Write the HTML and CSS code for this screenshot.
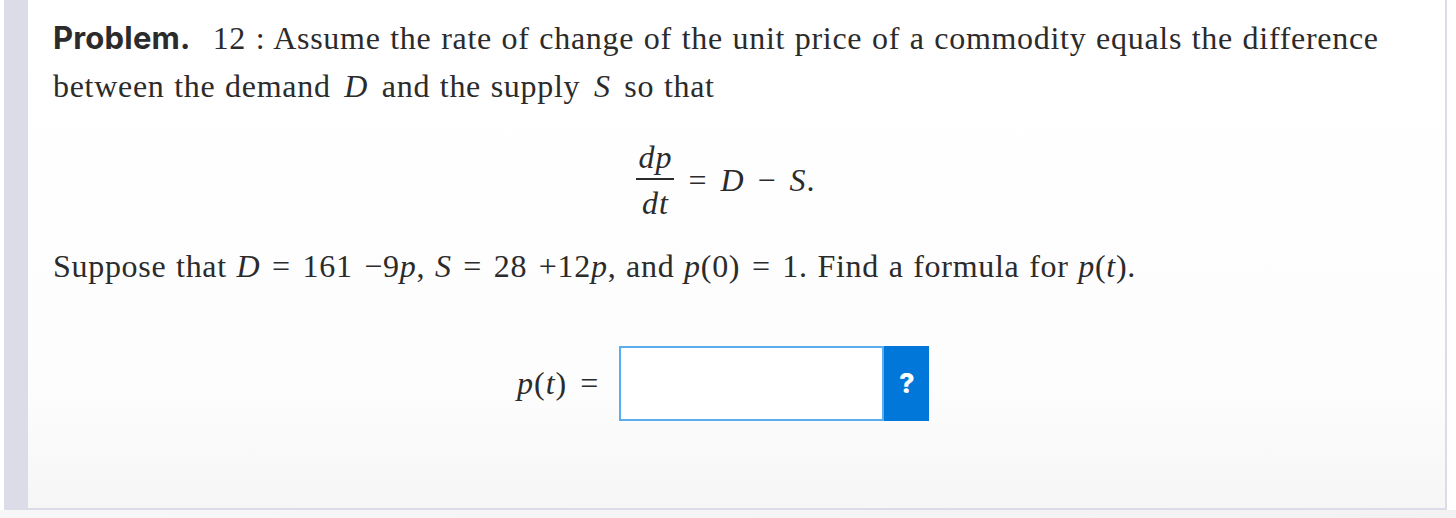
FILE: index.html
```html
<!DOCTYPE html>
<html>
<head>
<meta charset="utf-8">
<link rel="stylesheet" href="styles.css">
</head>
<body>
<div class="page">
  <div class="strip"></div>
  <div class="card">
    <p class="line"><span class="label">Problem.</span>12 : Assume the rate of change of the unit price of a commodity equals the difference between the demand <i class="v">D</i> and the supply <i class="v">S</i> so that</p>
    <div class="display">
      <span class="frac"><span class="numer"><i>dp</i></span><span class="denom"><i>dt</i></span></span>
      <span class="eq">= <i>D</i> − <i>S</i>.</span>
    </div>
    <p class="line">Suppose that <span class="m"><i>D</i> = 161 −9<i>p</i></span>, <span class="m"><i>S</i> = 28 +12<i>p</i></span>, and <span class="m"><i>p</i>(0) = 1</span>. Find a formula for <i>p</i>(<i>t</i>).</p>
    <div class="answer">
      <span class="lhs"><i>p</i>(<i>t</i>) =</span>
      <span class="field"></span>
      <span class="help">?</span>
    </div>
  </div>
</div>
</body>
</html>
```
FILE: styles.css
```css
html, body {
  margin: 0;
  padding: 0;
}
body {
  background: linear-gradient(to right, #f7f7f7, #f2f2f2);
  color: #2b2b2b;
  font-family: "Liberation Serif", serif;
}
.page {
  display: flex;
  height: 510px;
  padding-left: 4px;
  padding-right: 9px;
  background: #fff;
}
.strip {
  width: 24px;
  background: #dcdce9;
}
.card {
  flex: 1;
  background: linear-gradient(to bottom, #ffffff 0%, #fdfdfd 75%, #f6f6f6 100%);
  border-right: 2px solid #dcdce9;
  border-bottom: 2px solid #dcdce9;
  padding: 14px 20px 0 25px;
}
.line {
  margin: 0;
  font-size: 32px;
  line-height: 48px;
  letter-spacing: 0.7px;
  word-spacing: 1px;
}
.label {
  font-family: Inter, "Liberation Sans", sans-serif;
  font-weight: 700;
  font-size: 31px;
  letter-spacing: 0.2px;
  margin-right: 22px;
}
.m {
  word-spacing: 3px;
}
i {
  font-style: italic;
}
.v {
  margin: 0 4px;
}
.display {
  display: flex;
  align-items: center;
  justify-content: center;
  gap: 14px;
  font-size: 32px;
  height: 124px;
  padding-top: 8px;
  letter-spacing: 1px;
  word-spacing: 4px;
  padding-right: 26px;
}
.frac {
  display: inline-flex;
  flex-direction: column;
  align-items: center;
  line-height: 34px;
}
.numer {
  padding: 0 2px 4px;
  border-bottom: 2px solid #2b2b2b;
}
.denom {
  padding: 6px 2px 0;
}
.answer {
  display: flex;
  align-items: center;
  margin-top: 56px;
  margin-left: 464px;
}
.lhs {
  font-size: 32px;
  letter-spacing: 1px;
  word-spacing: 4px;
  margin-right: 20px;
}
.field {
  width: 261px;
  height: 71px;
  border: 2px solid #5aaef0;
  background: #fff;
}
.help {
  width: 45px;
  height: 75px;
  background: #0077d9;
  color: #fff;
  font-family: Inter, "Liberation Sans", sans-serif;
  font-weight: 800;
  font-size: 27px;
  display: flex;
  align-items: center;
  justify-content: center;
}
```
